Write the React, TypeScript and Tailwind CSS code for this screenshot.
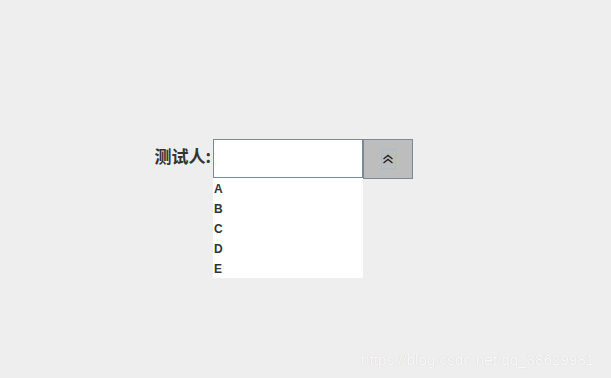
import React from "react";

export default function App() {
  const items = ["A", "B", "C", "D", "E"];
  return (
    <div className="relative w-[611px] h-[378px] bg-[#eeeeee] overflow-hidden" style={{ fontFamily: '"Liberation Sans", "Noto Sans CJK SC", sans-serif' }}>
      <div className="flex pt-[139px] pl-[149px]">
        <div className="w-[64px] h-[39px] flex items-center justify-end pr-[2px] pb-[5px] text-[17px] font-bold text-[#333333] whitespace-nowrap" style={{ fontFamily: '"Noto Sans CJK SC", sans-serif' }}>
          测试人:
        </div>
        <div className="flex flex-col">
          <div className="w-[150px] h-[39px] bg-white border border-[#7a8a99]"></div>
          <div className="w-[150px] bg-white flex flex-col pt-[1px]">
            {items.map((it, i) => (
              <div key={it} className={`${i === 4 ? "h-[19px]" : "h-[20px]"} flex items-center pl-[1px] text-[12px] font-bold text-[#333333]`}>
                {it}
              </div>
            ))}
          </div>
        </div>
        <div className="w-[50px] h-[40px] bg-[#bdbdbd] border border-[#7a8a99] flex items-center justify-center">
          <div className="w-[15px] h-[20px] border border-[#a8bcd0] flex items-center justify-center">
            <svg width="12" height="10" viewBox="0 0 12 10">
              <path d="M1.5 5 L6 1.5 L10.5 5" fill="none" stroke="#222" strokeWidth="1.4" />
              <path d="M1.5 9 L6 5.5 L10.5 9" fill="none" stroke="#222" strokeWidth="1.4" />
            </svg>
          </div>
        </div>
      </div>
      <div className="absolute left-[361px] top-[349px] text-[15.2px] text-[#f9f9f9] whitespace-nowrap" style={{ textShadow: "0 0 1px rgba(0,0,0,0.15)" }}>
        https://blog.csdn.net/qq_38629981
      </div>
    </div>
  );
}
